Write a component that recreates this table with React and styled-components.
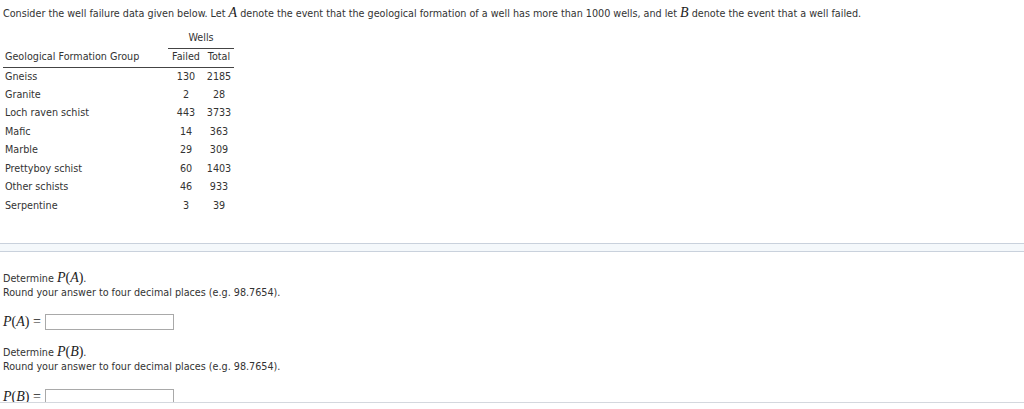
import React from "react";
import styled, { createGlobalStyle } from "styled-components";

const Global = createGlobalStyle`
  html, body { margin: 0; padding: 0; background: #fff; }
  body {
    font-family: "DejaVu Sans Condensed", "DejaVu Sans", Verdana, sans-serif;
    font-stretch: semi-condensed;
    font-size: 10.7px;
    color: #333;
  }
`;

const Page = styled.div`
  width: 1024px;
  height: 402px;
  overflow: hidden;
  border-bottom: 1px solid #d4d8de;
`;

const Intro = styled.div`
  padding: 7px 3px 0;
`;

const Para = styled.p`
  margin: 0;
  line-height: 14px;
  height: 14px;
  white-space: nowrap;
`;

const M = styled.span`
  font-family: "Liberation Serif", "Times New Roman", serif;
  font-stretch: normal;
  font-size: 14px;
  line-height: 0;
  font-style: ${(p) => (p.$up ? "normal" : "italic")};
  color: #222;
`;

const Table = styled.table`
  border-collapse: collapse;
  margin-top: 7px;
  table-layout: fixed;
`;

const Col = styled.col`
  width: ${(p) => p.$w}px;
`;

const Th = styled.th`
  font-weight: normal;
  text-align: ${(p) => p.$align || "center"};
  padding: 0 0 3px ${(p) => p.$left || 0}px;
  height: ${(p) => p.$h || 20}px;
  line-height: 14px;
  border-bottom: ${(p) => (p.$line ? "1px solid #444" : "none")};
  vertical-align: bottom;
  white-space: nowrap;
  box-sizing: border-box;
`;

const Td = styled.td`
  text-align: ${(p) => p.$align || "center"};
  padding: ${(p) => (p.$align === "left" ? "0 0 0 2px" : "0")};
  height: 18.5px;
  line-height: 14px;
  white-space: nowrap;
  box-sizing: border-box;
`;

const Divider = styled.div`
  margin-top: 28px;
  height: 7px;
  background: #f4f8fb;
  border-top: 1px solid #c9d1dc;
  border-bottom: 1px solid #c9d1dc;
`;

const Question = styled.div`
  padding: 0 3px;
  margin-top: ${(p) => p.$top}px;
`;

const AnswerRow = styled.div`
  display: flex;
  align-items: flex-end;
  gap: 4px;
  margin-top: ${(p) => p.$top}px;
  height: 16px;
`;

const Lhs = styled.span`
  white-space: nowrap;
  line-height: 14px;
  padding-bottom: ${(p) => p.$drop}px;
`;

const Input = styled.div`
  width: 127px;
  height: 14px;
  border: 1px solid #a9a9a9;
  background: #fff;
  align-self: flex-start;
`;

const rows = [
  ["Gneiss", "130", "2185"],
  ["Granite", "2", "28"],
  ["Loch raven schist", "443", "3733"],
  ["Mafic", "14", "363"],
  ["Marble", "29", "309"],
  ["Prettyboy schist", "60", "1403"],
  ["Other schists", "46", "933"],
  ["Serpentine", "3", "39"],
];

function QuestionBlock({ letter, top, rowTop, drop }) {
  return (
    <Question $top={top}>
      <Para>Determine <M>P</M><M $up>(</M><M>{letter}</M><M $up>)</M>.</Para>
      <Para>Round your answer to four decimal places (e.g. 98.7654).</Para>
      <AnswerRow $top={rowTop}>
        <Lhs $drop={drop}><M>P</M><M $up>(</M><M>{letter}</M><M $up>) =</M></Lhs>
        <Input />
      </AnswerRow>
    </Question>
  );
}

export default function App() {
  return (
    <Page>
      <Global />
      <Intro>
        <Para>
          Consider the well failure data given below. Let <M>A</M> denote the event that the geological formation of a well has more than 1000 wells, and let <M>B</M> denote the event that a well failed.
        </Para>
        <Table>
          <colgroup>
            <Col $w={165} />
            <Col $w={36} />
            <Col $w={30} />
          </colgroup>
          <thead>
            <tr>
              <Th $align="left" $h={20} />
              <Th colSpan={2} $line $h={20}>Wells</Th>
            </tr>
            <tr>
              <Th $align="left" $line $left={2} $h={19}>Geological Formation Group</Th>
              <Th $line $h={19}>Failed</Th>
              <Th $line $h={19}>Total</Th>
            </tr>
          </thead>
          <tbody>
            {rows.map((r) => (
              <tr key={r[0]}>
                <Td $align="left">{r[0]}</Td>
                <Td>{r[1]}</Td>
                <Td>{r[2]}</Td>
              </tr>
            ))}
          </tbody>
        </Table>
      </Intro>
      <Divider />
      <QuestionBlock letter="A" top={20} rowTop={14} drop={0} />
      <QuestionBlock letter="B" top={16} rowTop={15} drop={0} />
    </Page>
  );
}
